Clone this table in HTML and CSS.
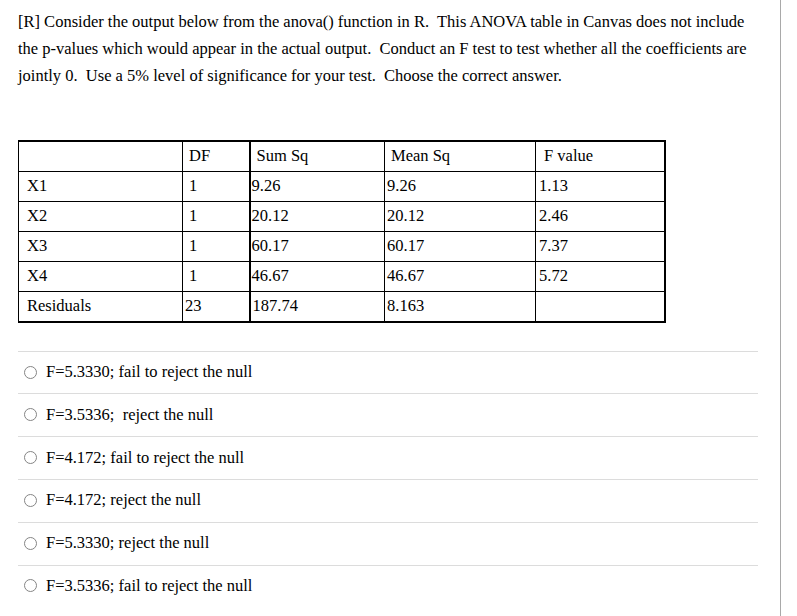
FILE: index.html
```html
<!DOCTYPE html>
<html>
<head>
<meta charset="utf-8">
<link rel="stylesheet" href="styles.css">
</head>
<body>
<div class="page">
  <div class="content">
    <p class="question">[R] Consider the output below from the anova() function in R.&nbsp; This ANOVA table in Canvas does not include the p-values which would appear in the actual output.&nbsp; Conduct an F test to test whether all the coefficients are jointly 0.&nbsp; Use a 5% level of significance for your test.&nbsp; Choose the correct answer.</p>

    <table class="anova">
      <colgroup>
        <col class="c1"><col class="c2"><col class="c3"><col class="c4"><col class="c5">
      </colgroup>
      <tr>
        <td class="p8"></td>
        <td class="p6">DF</td>
        <td class="p6 thick">Sum Sq</td>
        <td class="p6">Mean Sq</td>
        <td class="p8">F value</td>
      </tr>
      <tr>
        <td class="p8">X1</td>
        <td class="p6">1</td>
        <td class="p1 thick">9.26</td>
        <td class="p2">9.26</td>
        <td class="p3">1.13</td>
      </tr>
      <tr>
        <td class="p8">X2</td>
        <td class="p6">1</td>
        <td class="p1 thick">20.12</td>
        <td class="p2">20.12</td>
        <td class="p3">2.46</td>
      </tr>
      <tr>
        <td class="p8">X3</td>
        <td class="p6">1</td>
        <td class="p1 thick">60.17</td>
        <td class="p2">60.17</td>
        <td class="p3">7.37</td>
      </tr>
      <tr>
        <td class="p8">X4</td>
        <td class="p6">1</td>
        <td class="p1 thick">46.67</td>
        <td class="p2">46.67</td>
        <td class="p3">5.72</td>
      </tr>
      <tr>
        <td class="p8">Residuals</td>
        <td class="p2">23</td>
        <td class="p2 thick">187.74</td>
        <td class="p2">8.163</td>
        <td class="p3"></td>
      </tr>
    </table>

    <ul class="answers">
      <li class="answer"><span class="radio"></span><span class="label">F=5.3330; fail to reject the null</span></li>
      <li class="answer"><span class="radio"></span><span class="label">F=3.5336;&nbsp; reject the null</span></li>
      <li class="answer"><span class="radio"></span><span class="label">F=4.172; fail to reject the null</span></li>
      <li class="answer"><span class="radio"></span><span class="label">F=4.172; reject the null</span></li>
      <li class="answer"><span class="radio"></span><span class="label">F=5.3330; reject the null</span></li>
      <li class="answer last"><span class="radio"></span><span class="label">F=3.5336; fail to reject the null</span></li>
    </ul>
  </div>
</div>
</body>
</html>
```

FILE: styles.css
```css
html, body {
  margin: 0;
  padding: 0;
  background: #fff;
}

body {
  font-family: "Liberation Serif", "Times New Roman", serif;
  font-size: 16.5px;
  color: #000;
}

.page {
  width: 780px;
  min-height: 616px;
  border-right: 1px solid #a9a9a9;
}

.content {
  padding: 8px 22px 0 18px;
}

.question {
  margin: 0;
  line-height: 27.2px;
}

.anova {
  margin-top: 50px;
  border-collapse: collapse;
  table-layout: fixed;
  width: 646px;
  border-top: 2px solid #000;
  border-right: 2px solid #000;
  border-bottom: 2px solid #000;
}

.anova .c1 { width: 164px; }
.anova .c2 { width: 67px; }
.anova .c3 { width: 135px; }
.anova .c4 { width: 151px; }
.anova .c5 { width: 129px; }

.anova td {
  border: 1px solid #000;
  height: 29px;
  padding: 0;
  vertical-align: middle;
  line-height: 18px;
  white-space: nowrap;
}

.anova td.thick {
  border-left: 2px solid #000;
}

.anova .p1 { padding-left: 1px; }
.anova .p2 { padding-left: 2px; }
.anova .p3 { padding-left: 3px; }
.anova .p6 { padding-left: 6px; }
.anova .p8 { padding-left: 8px; }

.answers {
  list-style: none;
  margin: 28px 0 0 0;
  padding: 0;
  width: 740px;
}

.answer {
  display: flex;
  align-items: center;
  height: 42.8px;
  border-top: 1px solid #dcdcdc;
  box-sizing: border-box;
  padding-bottom: 1px;
}

.radio {
  width: 13px;
  height: 13px;
  box-sizing: border-box;
  border: 1px solid #858585;
  border-radius: 50%;
  margin-left: 6px;
  margin-right: 9px;
  flex: none;
}

.label {
  line-height: 18px;
}
```
